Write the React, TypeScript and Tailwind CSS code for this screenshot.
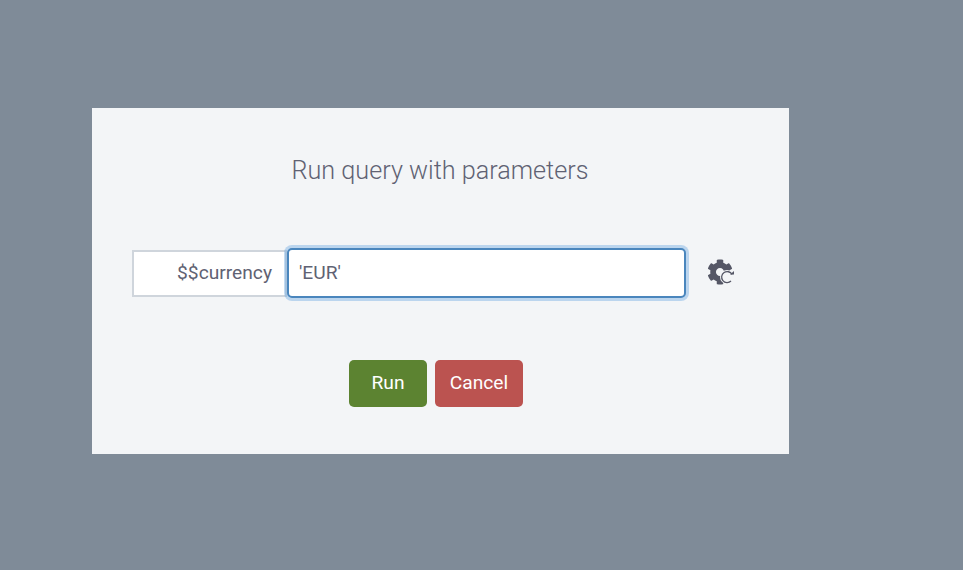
import { FaCog } from "react-icons/fa";

export default function App() {
  return (
    <div className="h-[570px] w-[963px] overflow-hidden bg-[#7f8b98] pt-[108px] pl-[92px] font-['Roboto',sans-serif]">
      <div className="flex h-[346px] w-[697px] flex-col bg-[#f3f5f7]">
        <h1 className="mt-[45px] h-[35px] pr-[1px] text-center text-[25.2px] leading-[35px] font-light text-[#5f6273]">
          Run query with parameters
        </h1>
        <div className="mt-[60px] ml-[40px] flex h-[50px] items-center">
          <div className="flex h-[47px] w-[155px] items-center justify-end border-2 border-[#cfd5dc] bg-white pr-[13px] text-[19.2px] text-[#5f6273]">
            $$currency
          </div>
          <div className="flex h-[50px] w-[399px] items-center rounded-[5px] border-2 border-[#4a86bd] bg-white pl-[10px] text-[19.2px] text-[#5f6273] shadow-[0_0_0_3px_rgba(102,165,225,0.4)]">
            'EUR'
          </div>
          <div className="relative ml-[21px] h-[28px] w-[28px] text-[#555766]">
            <FaCog className="h-[26px] w-[26px]" />
            <svg className="absolute top-[9px] left-[12px] h-[17px] w-[17px]" viewBox="0 0 17 17">
              <circle cx="8" cy="9" r="7" fill="#f3f5f7" />
              <path d="M13 6.5A5.5 5.5 0 1 0 12 13" fill="none" stroke="#555766" strokeWidth="1.3" />
              <path d="M11 6.5h4V3z" fill="#555766" />
            </svg>
          </div>
        </div>
        <div className="mt-[62px] flex justify-center gap-[8px] pr-[9px]">
          <button className="h-[47px] w-[78px] rounded-[5px] bg-[#5c8331] text-[19.2px] text-white">Run</button>
          <button className="h-[47px] w-[88px] rounded-[5px] bg-[#bb5350] text-[19.2px] text-white">Cancel</button>
        </div>
      </div>
    </div>
  );
}
